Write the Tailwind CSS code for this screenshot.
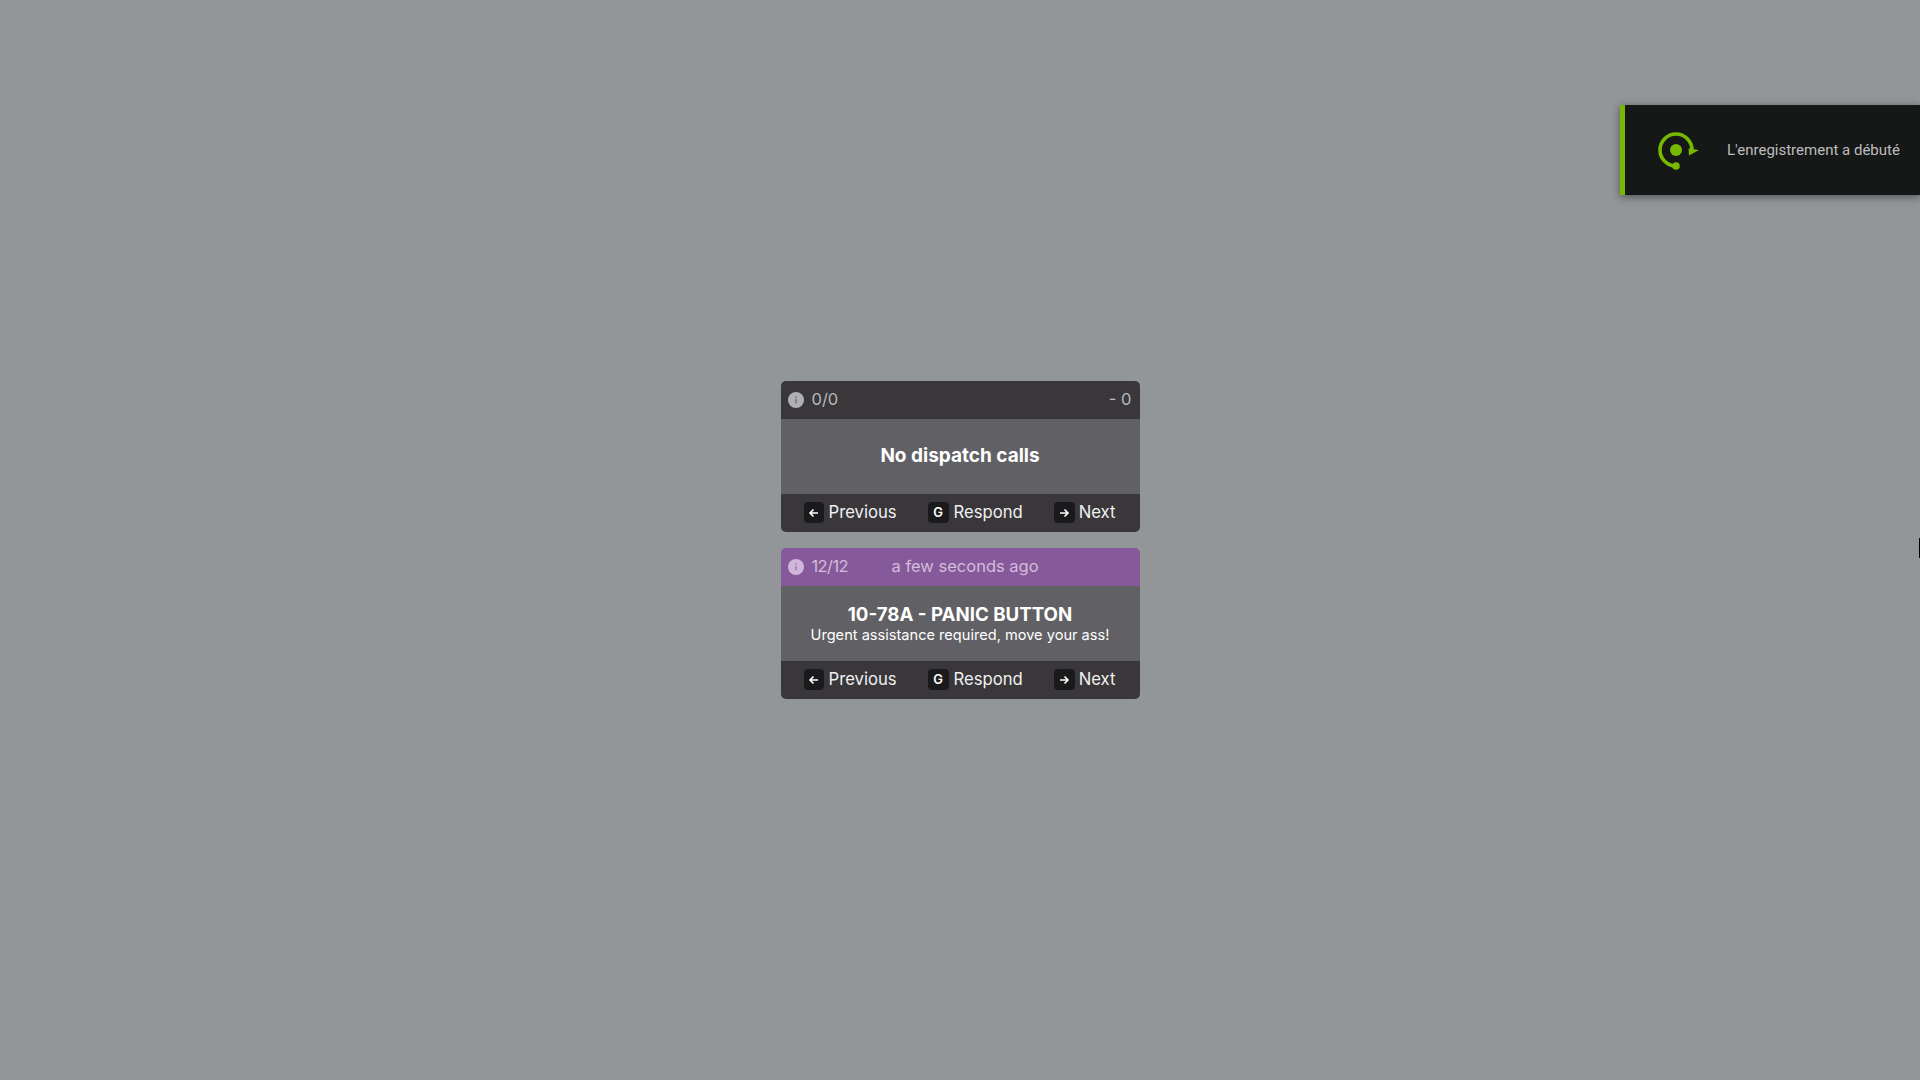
<!DOCTYPE html>
<html lang="en">
<head>
  <meta charset="UTF-8" />
  <title>Dispatch</title>
  <script src="https://cdn.jsdelivr.net/npm/@tailwindcss/browser@4"></script>
</head>
<body class="relative w-[1920px] h-[1080px] overflow-hidden bg-[#929699] font-['Inter',sans-serif]">

  <!-- dispatch cards -->
  <main class="flex flex-col items-center gap-4 pt-[381px]">

    <section class="w-[359px] rounded-[5px] overflow-hidden">
      <div class="h-[38px] bg-[#39373a] flex items-center justify-between pl-[7px] pr-2 text-[#b8b7b9] text-[16.5px]">
        <div class="flex items-center gap-2">
          <svg width="16" height="16" viewBox="0 0 16 16"><circle cx="8" cy="8" r="8" fill="#b0afb1"/><rect x="7.2" y="7" width="1.6" height="4.5" fill="#777578"/><rect x="7.2" y="4.3" width="1.6" height="1.6" fill="#777578"/></svg>
          <span class="-mt-px">0/0</span>
        </div>
        <span class="-mt-px">- 0</span>
      </div>
      <div class="h-[75px] bg-[#616064] flex items-center justify-center text-white font-bold text-[19px]">No dispatch calls</div>
      <div class="h-[38px] bg-[#39373a] flex items-center justify-between pl-[23px] pr-[24px] text-[#f0f0f0] text-[16.7px]">
        <div class="flex items-center gap-[5px]">
          <span class="w-5 h-[21px] rounded-[4px] bg-[#1a1a1c] flex items-center justify-center">
            <svg width="12" height="12" viewBox="0 0 12 12" fill="none" stroke="#fff" stroke-width="1.6"><path d="M10 6H2M5.5 2.5 2 6l3.5 3.5"/></svg>
          </span>
          <span class="-mt-px">Previous</span>
        </div>
        <div class="flex items-center gap-[5px]">
          <span class="w-[21px] h-[21px] rounded-[4px] bg-[#1a1a1c] flex items-center justify-center text-white text-[13px] font-semibold">G</span>
          <span class="-mt-px">Respond</span>
        </div>
        <div class="flex items-center gap-1">
          <span class="w-[21px] h-[21px] rounded-[4px] bg-[#1a1a1c] flex items-center justify-center">
            <svg width="12" height="12" viewBox="0 0 12 12" fill="none" stroke="#fff" stroke-width="1.6"><path d="M2 6h8M6.5 2.5 10 6 6.5 9.5"/></svg>
          </span>
          <span class="-mt-px">Next</span>
        </div>
      </div>
    </section>

    <section class="w-[359px] rounded-[5px] overflow-hidden">
      <div class="h-[38px] bg-[#865a9a] flex items-center pl-[7px] pr-2 text-[#d3bcdc] text-[16.5px]">
        <svg width="16" height="16" viewBox="0 0 16 16"><circle cx="8" cy="8" r="8" fill="#d0b6da"/><rect x="7.2" y="7" width="1.6" height="4.5" fill="#a57fb6"/><rect x="7.2" y="4.3" width="1.6" height="1.6" fill="#a57fb6"/></svg>
        <span class="ml-2 w-[80px] -mt-px tracking-[-0.6px]">12/12</span>
        <span class="-mt-px">a few seconds ago</span>
      </div>
      <div class="h-[75px] bg-[#616064] flex flex-col items-center justify-center text-white">
        <div class="font-bold text-[18.7px] leading-[22px]">10-78A - PANIC BUTTON</div>
        <div class="text-[14.6px] leading-[18px]">Urgent assistance required, move your ass!</div>
      </div>
      <div class="h-[38px] bg-[#39373a] flex items-center justify-between pl-[23px] pr-[24px] text-[#f0f0f0] text-[16.7px]">
        <div class="flex items-center gap-[5px]">
          <span class="w-5 h-[21px] rounded-[4px] bg-[#1a1a1c] flex items-center justify-center">
            <svg width="12" height="12" viewBox="0 0 12 12" fill="none" stroke="#fff" stroke-width="1.6"><path d="M10 6H2M5.5 2.5 2 6l3.5 3.5"/></svg>
          </span>
          <span class="-mt-px">Previous</span>
        </div>
        <div class="flex items-center gap-[5px]">
          <span class="w-[21px] h-[21px] rounded-[4px] bg-[#1a1a1c] flex items-center justify-center text-white text-[13px] font-semibold">G</span>
          <span class="-mt-px">Respond</span>
        </div>
        <div class="flex items-center gap-1">
          <span class="w-[21px] h-[21px] rounded-[4px] bg-[#1a1a1c] flex items-center justify-center">
            <svg width="12" height="12" viewBox="0 0 12 12" fill="none" stroke="#fff" stroke-width="1.6"><path d="M2 6h8M6.5 2.5 10 6 6.5 9.5"/></svg>
          </span>
          <span class="-mt-px">Next</span>
        </div>
      </div>
    </section>
  </main>

  <!-- recording toast -->
  <div class="absolute top-[105px] right-0 w-[300px] h-[90px] bg-[#161717] border-l-[5px] border-[#76b900] shadow-[0_2px_8px_rgba(0,0,0,0.45)] flex items-center">
    <svg class="ml-[32px]" width="44" height="44" viewBox="0 0 44 44" fill="none">
      <path d="M19 38A16 16 0 1 1 35 22" stroke="#76b900" stroke-width="3.6"/>
      <circle cx="19" cy="22" r="6" fill="#76b900"/>
      <circle cx="19" cy="38" r="3.8" fill="#76b900"/>
      <path d="M31.5 20.5l10.5 1.5-10 5.5z" fill="#76b900"/>
    </svg>
    <span class="ml-[26px] text-[#bdbdbd] text-[15px] whitespace-nowrap font-['Roboto',sans-serif]">L'enregistrement a débuté</span>
  </div>

  <!-- text cursor at the edge -->
  <div class="absolute left-[1919px] top-[538px] w-px h-[20px] bg-black"></div>
</body>
</html>
